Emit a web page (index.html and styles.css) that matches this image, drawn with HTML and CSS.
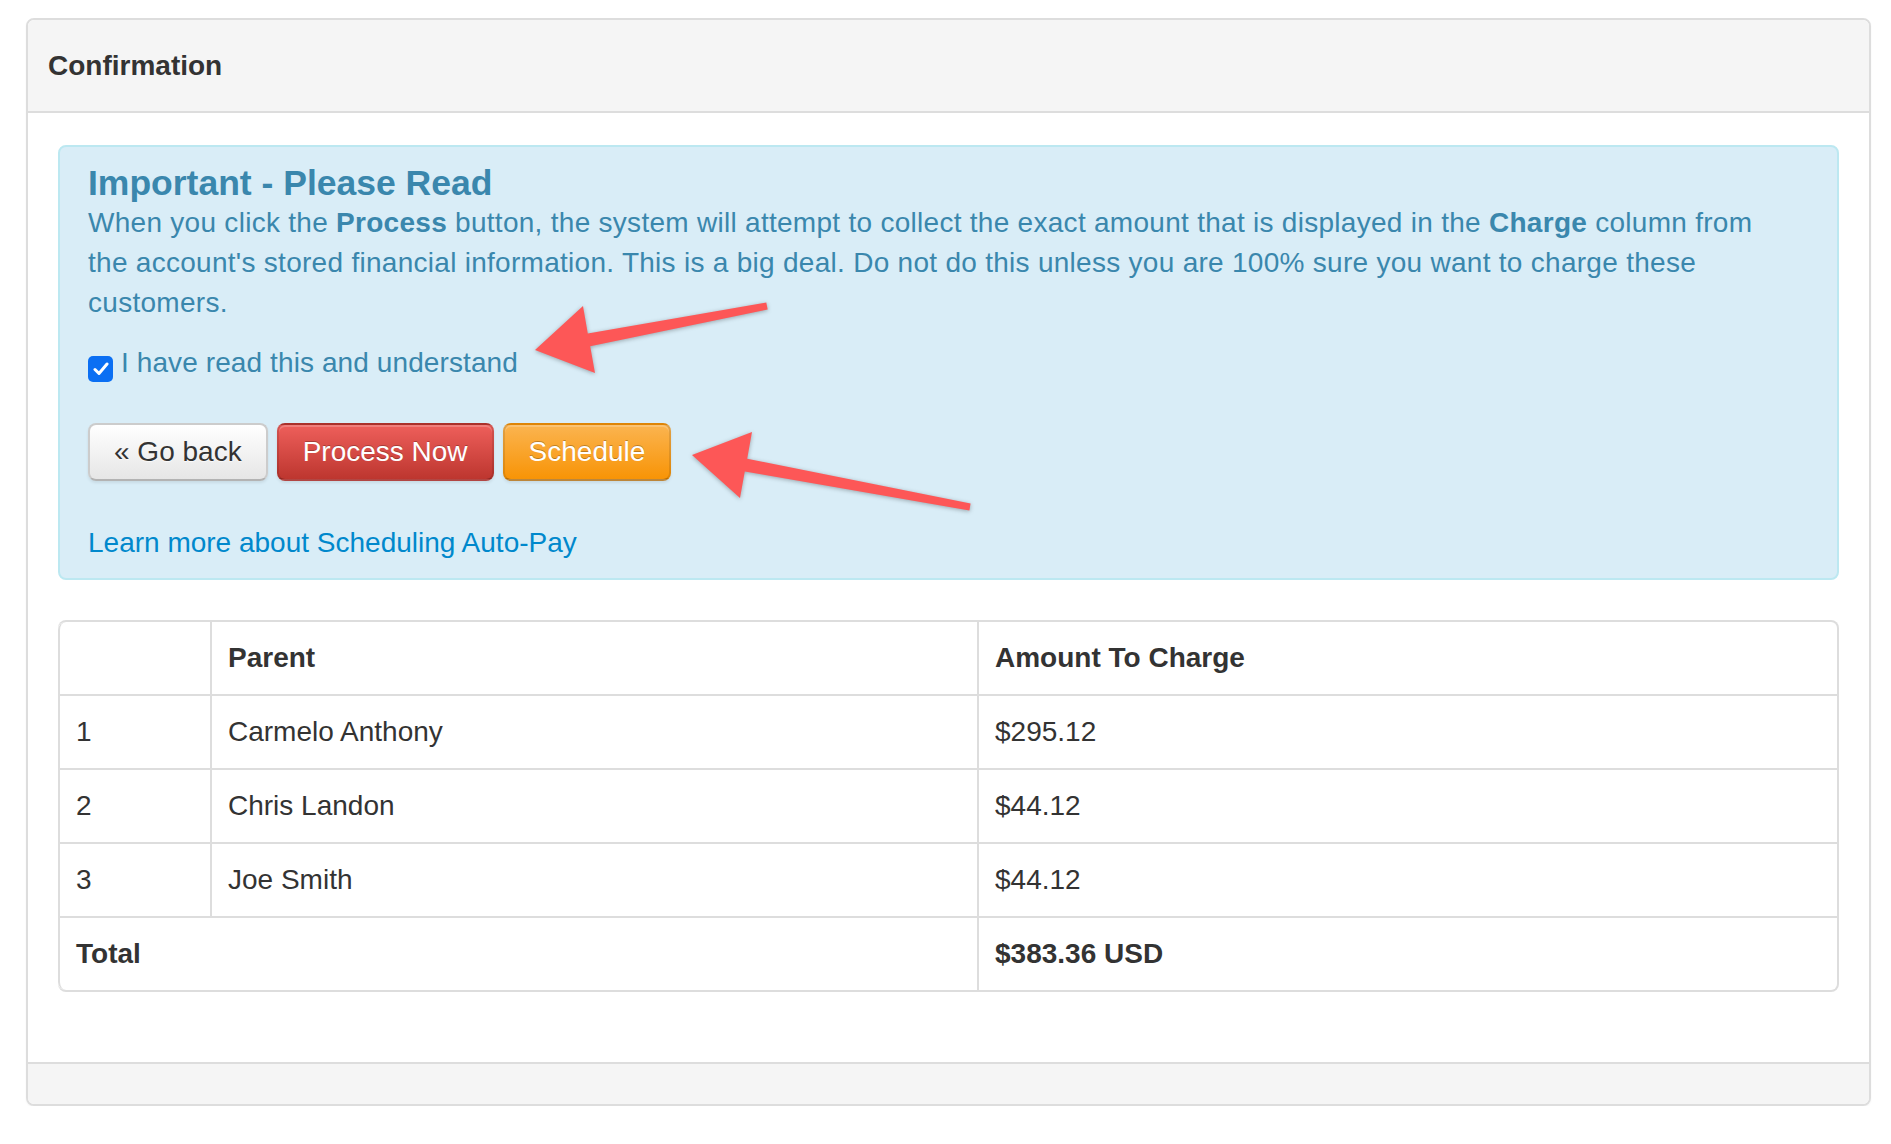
FILE: index.html
```html
<!DOCTYPE html>
<html lang="en">
<head>
  <meta charset="UTF-8" />
  <meta name="viewport" content="width=device-width, initial-scale=1.0" />
  <title>Confirmation</title>
  <link rel="stylesheet" href="styles.css">
</head>
<body>
  <div class="page">
    <div class="panel">
      <div class="panel-heading">Confirmation</div>
      <div class="panel-body">
        <div class="alert">
          <h4>Important - Please Read</h4>
          <p>When you click the <strong>Process</strong> button, the system will attempt to collect the exact amount that is displayed in the <strong>Charge</strong> column from the account's stored financial information. This is a big deal. Do not do this unless you are 100% sure you want to charge these customers.</p>
          <label class="confirm">
            <span class="check">
              <svg width="16" height="14" viewBox="0 0 16 14"><path d="M2 7.5 L6 11.5 L14 2" fill="none" stroke="#fff" stroke-width="3" stroke-linecap="round" stroke-linejoin="round"/></svg>
            </span>
            I have read this and understand
          </label>
          <div class="actions">
            <button class="btn">&laquo; Go back</button>
            <button class="btn btn-danger">Process Now</button>
            <button class="btn btn-warning">Schedule</button>
          </div>
          <a class="learn" href="#">Learn more about Scheduling Auto-Pay</a>
        </div>

        <table class="charges">
          <colgroup>
            <col class="col-num">
            <col class="col-parent">
            <col>
          </colgroup>
          <thead>
            <tr><th></th><th>Parent</th><th>Amount To Charge</th></tr>
          </thead>
          <tbody>
            <tr><td>1</td><td>Carmelo Anthony</td><td>$295.12</td></tr>
            <tr><td>2</td><td>Chris Landon</td><td>$44.12</td></tr>
            <tr><td>3</td><td>Joe Smith</td><td>$44.12</td></tr>
            <tr class="total"><td colspan="2">Total</td><td>$383.36 USD</td></tr>
          </tbody>
        </table>
      </div>
      <div class="panel-footer"></div>
    </div>
  </div>

  <!-- annotation arrows drawn over the screenshot -->
  <svg class="annotations" width="1891" height="1144" viewBox="0 0 1891 1144">
    <polygon points="766.3,302.6 587.8,333.4 583,306 535,350 595,373 590.2,346.2 767.7,309.4" />
    <polygon points="970.6,503.6 747.2,458.7 752,432 692,455 740,498 744.8,471.5 969.4,510.4" />
  </svg>
</body>
</html>
```

FILE: styles.css
```css
body {
  margin: 0;
  font-family: "Liberation Sans", Arial, sans-serif;
  font-size: 28px;
  line-height: 40px;
  color: #333;
  background: #fff;
  position: relative;
}
.page {
  padding: 18px 20px 0 26px;
}
.panel {
  border: 2px solid #ddd;
  border-radius: 8px;
  background: #fff;
  box-shadow: 0 1px 2px rgba(0, 0, 0, 0.05);
  overflow: hidden;
}
.panel-heading {
  background: #f5f5f5;
  border-bottom: 2px solid #ddd;
  padding: 26px 20px 25px;
  font-weight: bold;
  color: #333;
}
.panel-body {
  padding: 32px 30px 30px;
}
.panel-footer {
  background: #f5f5f5;
  border-top: 2px solid #ddd;
  height: 40px;
}
.alert {
  background: #d9edf7;
  border: 2px solid #bce8f1;
  border-radius: 8px;
  color: #3a87ad;
  padding: 16px 70px 15px 28px;
  margin-bottom: 40px;
}
.alert h4 {
  margin: 0;
  font-size: 35.5px;
  line-height: 40px;
  font-weight: bold;
}
.alert p {
  margin: 0 0 20px;
  letter-spacing: 0.28px;
}
.confirm {
  display: flex;
  align-items: flex-start;
  gap: 8px;
  letter-spacing: 0.1px;
}
.check {
  width: 25px;
  height: 26px;
  margin-top: 13px;
  border-radius: 5px;
  background: #0b6ff3;
  display: flex;
  align-items: center;
  justify-content: center;
  flex-shrink: 0;
}
.actions {
  display: flex;
  gap: 9px;
  margin-top: 40px;
}
.btn {
  font-family: inherit;
  font-size: 28px;
  line-height: 38px;
  padding: 8px 24px;
  border-radius: 8px;
  border: 2px solid #ccc;
  border-bottom-color: #b3b3b3;
  color: #333;
  background: linear-gradient(#ffffff, #e6e6e6);
  text-shadow: 0 1px 1px rgba(255, 255, 255, 0.75);
  box-shadow: inset 0 2px 0 rgba(255, 255, 255, 0.2), 0 2px 3px rgba(0, 0, 0, 0.08);
  cursor: pointer;
}
.btn-danger {
  color: #fff;
  background: linear-gradient(#ee5f5b, #bd362f);
  border-color: rgba(0, 0, 0, 0.1) rgba(0, 0, 0, 0.1) rgba(0, 0, 0, 0.25);
  text-shadow: 0 -1px 0 rgba(0, 0, 0, 0.25);
}
.btn-warning {
  color: #fff;
  background: linear-gradient(#fbb450, #f89406);
  border-color: rgba(0, 0, 0, 0.1) rgba(0, 0, 0, 0.1) rgba(0, 0, 0, 0.25);
  text-shadow: 0 -1px 0 rgba(0, 0, 0, 0.25);
}
.learn {
  display: block;
  margin-top: 42px;
  color: #0088cc;
  text-decoration: none;
}
.charges {
  width: 100%;
  table-layout: fixed;
  border-collapse: separate;
  border-spacing: 0;
  border: 2px solid #ddd;
  border-left: 0;
  border-radius: 8px;
  margin-bottom: 40px;
}
.col-num {
  width: 152px;
}
.col-parent {
  width: 767px;
}
.charges th,
.charges td {
  text-align: left;
  padding: 16px 16px;
  border-left: 2px solid #ddd;
  border-top: 2px solid #ddd;
  vertical-align: top;
}
.charges thead th {
  border-top: 0;
}
.charges th:first-child {
  border-top-left-radius: 8px;
}
.charges tr:last-child td:first-child {
  border-bottom-left-radius: 8px;
}
.charges th,
.charges .total td {
  font-weight: bold;
}
.annotations {
  position: absolute;
  top: 0;
  left: 0;
  pointer-events: none;
  fill: #fd5757;
  filter: drop-shadow(0 1px 2px rgba(0, 0, 0, 0.3));
}
```
